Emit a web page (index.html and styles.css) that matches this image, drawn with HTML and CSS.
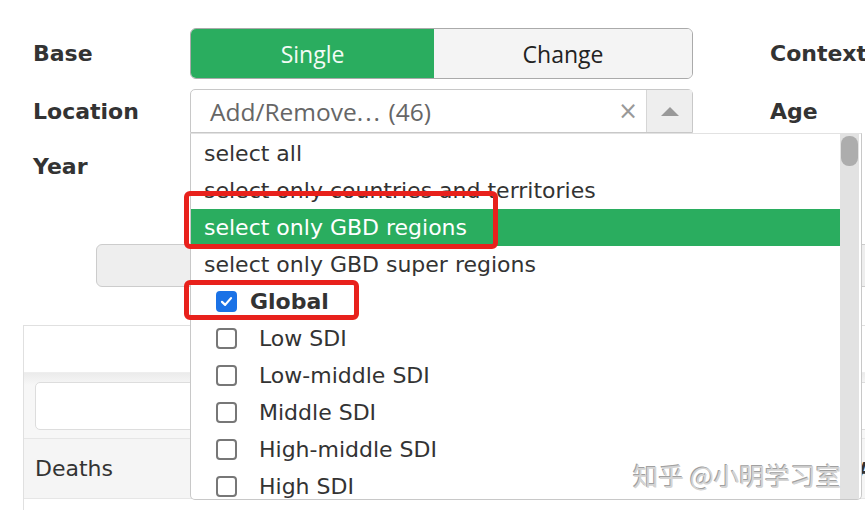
FILE: index.html
```html
<!DOCTYPE html>
<html lang="en">
<head>
    <meta charset="UTF-8" />
    <meta name="viewport" content="width=device-width, initial-scale=1" />
    <title>GBD Compare</title>
    <link rel="stylesheet" href="styles.css">
</head>
<body>
    <div class="form">
        <div class="label">Base</div>
        <div class="toggle">
            <button class="toggle-btn active">Single</button>
            <button class="toggle-btn">Change</button>
        </div>
        <div></div>
        <div class="label">Context</div>

        <div class="label">Location</div>
        <div class="select-wrap">
            <div class="select">
                <span class="placeholder">Add/Remove<span class="dots">...</span> (46)</span>
                <span class="clear">×</span>
                <span class="arrow"><span class="tri"></span></span>
            </div>

            <!-- dropdown open -->
            <div class="dropdown">
                <div class="options">
                    <div class="opt">select all</div>
                    <div class="opt">select only countries and territories</div>
                    <div class="opt hover">select only GBD regions</div>
                    <div class="opt">select only GBD super regions</div>
                    <div class="opt check-opt">
                        <span class="box checked">
                            <svg viewBox="0 0 20 20" width="15" height="15"><path d="M4 10.5 L8.2 14.5 L16 5.5" fill="none" stroke="#fff" stroke-width="3" stroke-linecap="round" stroke-linejoin="round"/></svg>
                        </span>
                        <b>Global</b>
                    </div>
                    <div class="opt check-opt"><span class="box"></span>Low SDI</div>
                    <div class="opt check-opt"><span class="box"></span>Low-middle SDI</div>
                    <div class="opt check-opt"><span class="box"></span>Middle SDI</div>
                    <div class="opt check-opt"><span class="box"></span>High-middle SDI</div>
                    <div class="opt check-opt"><span class="box"></span>High SDI</div>
                </div>
                <div class="scrollbar"><div class="thumb"></div></div>

                <div class="mark mark-regions"></div>
                <div class="mark mark-global"></div>
            </div>
        </div>
        <div></div>
        <div class="label">Age</div>

        <div class="label">Year</div>
    </div>

    <div class="action-row">
        <div class="wide-btn"></div>
    </div>

    <div class="panel">
        <div class="panel-head"></div>
        <div class="panel-search">
            <div class="search-input"></div>
        </div>
        <div class="panel-row">
            <span class="cell">Deaths</span>
            <span class="cell-far">A</span>
        </div>
        <div class="panel-row blank"></div>
    </div>

    <div class="watermark">知乎 @小明学习室</div>
</body>
</html>
```

FILE: styles.css
```css
body {
    margin: 0;
    font-family: "DejaVu Sans", sans-serif;
    color: #333;
    background: #fff;
    width: 865px;
    height: 510px;
    overflow: hidden;
    position: relative;
}
.form {
    display: grid;
    grid-template-columns: 157px 503px 77px 1fr;
    grid-template-rows: 51px 44px 46px;
    row-gap: 10px;
    align-items: center;
    padding: 28px 0 0 33px;
}
.label {
    font-weight: bold;
    font-size: 22px;
    color: #333;
    white-space: nowrap;
}
.toggle {
    display: flex;
    height: 51px;
    border: 1px solid #aaa;
    border-radius: 6px;
    overflow: hidden;
    box-sizing: border-box;
}
.toggle-btn {
    font-family: "Open Sans", sans-serif;
    font-size: 23px;
    border: none;
    background: #f4f4f4;
    color: #222;
    padding: 0;
}
.toggle-btn:first-child {
    width: 243px;
}
.toggle-btn:last-child {
    flex: 1;
}
.toggle-btn.active {
    background: #2aad5f;
    color: #f2fbf5;
}
.select-wrap {
    position: relative;
    height: 44px;
}
.select {
    display: flex;
    align-items: center;
    height: 44px;
    box-sizing: border-box;
    border: 1px solid #c8c8c8;
    border-radius: 5px 5px 0 0;
    font-family: "Open Sans", sans-serif;
}
.placeholder {
    flex: 1;
    padding-left: 19px;
    font-size: 24.5px;
    color: #666;
    white-space: nowrap;
}
.dots {
    letter-spacing: 2px;
}
.clear {
    font-size: 24px;
    color: #999;
    margin-right: 8px;
    font-family: "DejaVu Sans", sans-serif;
}
.arrow {
    width: 45px;
    align-self: stretch;
    background: #eee;
    border-left: 1px solid #d6d6d6;
    display: flex;
    align-items: center;
    justify-content: center;
}
.tri {
    width: 0;
    height: 0;
    border-left: 9px solid transparent;
    border-right: 9px solid transparent;
    border-bottom: 9px solid #999;
}
.dropdown {
    position: absolute;
    top: 100%;
    left: 0;
    width: 672px;
    height: 367px;
    box-sizing: border-box;
    border: 1px solid #c8c8c8;
    border-top-color: #e2e2e2;
    border-radius: 0 0 5px 5px;
    background: #fff;
    display: flex;
    z-index: 2;
}
.options {
    width: 649px;
    padding-top: 1px;
    overflow: hidden;
}
.opt {
    height: 37px;
    display: flex;
    align-items: center;
    padding-left: 13px;
    font-size: 22px;
    color: #333;
    white-space: nowrap;
}
.opt.hover {
    background: #2aad5f;
    color: #fff;
}
.check-opt {
    padding-left: 25px;
}
.box {
    width: 21px;
    height: 21px;
    box-sizing: border-box;
    border: 2px solid #777;
    border-radius: 4px;
    margin-right: 22px;
    display: flex;
    align-items: center;
    justify-content: center;
}
.box.checked {
    background: #1b72e6;
    border-color: #1b72e6;
    margin-right: 13px;
}
.scrollbar {
    width: 17px;
    background: #e2e2e2;
    padding: 2px 1px;
}
.thumb {
    height: 30px;
    background: #adadad;
    border-radius: 8px;
}
.mark {
    position: absolute;
    border: 5px solid #e8211c;
    border-radius: 6px;
    box-sizing: border-box;
}
.mark-regions {
    left: -7px;
    top: 57px;
    width: 314px;
    height: 58px;
}
.mark-global {
    left: -7px;
    top: 146px;
    width: 175px;
    height: 40px;
}
.action-row {
    margin-top: 55px;
    padding-left: 96px;
}
.wide-btn {
    height: 43px;
    width: 900px;
    box-sizing: border-box;
    background: #eee;
    border: 1px solid #ccc;
    border-radius: 6px;
}
.panel {
    margin: 38px 0 0 23px;
    width: 900px;
    border: 1px solid #e0e0e0;
}
.panel-head {
    height: 46px;
    border-bottom: 1px solid #eee;
}
.panel-search {
    background: linear-gradient(#ebebeb, #f7f7f7 12px);
    padding: 9px 11px 8px;
    border-bottom: 1px solid #e6e6e6;
}
.search-input {
    height: 46px;
    background: #fff;
    border: 1px solid #ddd;
    border-radius: 5px;
}
.panel-row {
    height: 59px;
    display: flex;
    align-items: center;
    background: #f5f5f5;
    border-bottom: 1px solid #e6e6e6;
    padding-left: 11px;
    font-size: 22px;
}
.cell {
    width: 823px;
}
.cell-far {
    font-weight: bold;
    font-size: 19px;
}
.panel-row.blank {
    background: #fff;
}
.watermark {
    position: absolute;
    left: 633px;
    top: 456px;
    font-family: "Noto Sans CJK SC", sans-serif;
    font-size: 25.5px;
    color: #d4d4d4;
    text-shadow: -1px -1px 0 #a0a0a0;
    z-index: 3;
    white-space: nowrap;
}
```
